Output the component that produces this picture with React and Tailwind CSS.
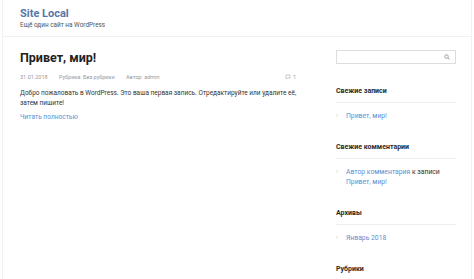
export default function App() {
  const link = "text-[#5b8fd1]";
  const Widget = ({ title, children }) => (
    <div className="mb-[21px]">
      <div className="text-[7px] font-bold text-[#2a2a2a] leading-[10px] pb-[6px] border-b border-[#eee]">{title}</div>
      <div className="pt-[8px]">{children}</div>
    </div>
  );
  const Li = ({ children }) => (
    <div className="flex items-start text-[6.8px] leading-[10px]">
      <span className="w-[10px] text-[#ccc]">›</span>
      <div className="flex-1">{children}</div>
    </div>
  );
  return (
    <div className="w-[474px] h-[279px] overflow-hidden bg-white" style={{ fontFamily: "Roboto, 'Noto Sans', sans-serif" }}>
      <div className="mx-[2px] h-full border-x border-[#f2f2f2]">
        <div className="h-[37px] border-b border-[#f0f0f0] pl-[17px] pt-[7px]">
          <div className="text-[11px] font-bold leading-[14px] text-[#5677a6]">Site Local</div>
          <div className="text-[6.4px] leading-[9px] text-[#555]">Ещё один сайт на WordPress</div>
        </div>
        <div className="flex pl-[17px] pt-[11px]">
          <div className="w-[284px]">
            <h1 className="text-[12.5px] font-bold leading-[20px] text-[#222]">Привет, мир!</h1>
            <div className="flex items-center mt-[5px] pr-[8px] text-[5.5px] leading-[8px] text-[#999]">
              <span className="w-[39px]">31.01.2018</span>
              <span className="w-[67px]">Рубрика: Без рубрики</span>
              <span>Автор: admin</span>
              <span className="ml-auto flex items-center gap-[2px]">
                <svg width="6" height="6" viewBox="0 0 12 12" fill="none" stroke="#aaa" strokeWidth="1.2"><path d="M2 2h8v6H5l-3 2z" /></svg>
                1
              </span>
            </div>
            <p className="mt-[7px] text-[6.5px] leading-[10px] text-[#333]">
              Добро пожаловать в WordPress. Это ваша первая запись. Отредактируйте или удалите её, затем пишите!
            </p>
            <div className={`mt-[4px] text-[6.6px] leading-[10px] ${link}`}>Читать полностью</div>
          </div>
          <div className="ml-[32px] w-[120px]">
            <div className="h-[14px] border border-[#ddd] flex items-center justify-end pr-[5px] mt-[2px]">
              <svg width="6" height="6" viewBox="0 0 12 12" fill="none" stroke="#888" strokeWidth="1.6"><circle cx="5" cy="5" r="3.5" /><path d="M8 8l3 3" /></svg>
            </div>
            <div className="mt-[22px]">
              <Widget title="Свежие записи">
                <Li><span className={link}>Привет, мир!</span></Li>
              </Widget>
              <Widget title="Свежие комментарии">
                <Li><span className={link}>Автор комментария</span> <span className="text-[#333]">к записи</span> <span className={link}>Привет, мир!</span></Li>
              </Widget>
              <Widget title="Архивы">
                <Li><span className={link}>Январь 2018</span></Li>
              </Widget>
              <div className="text-[7px] font-bold text-[#2a2a2a] leading-[10px]">Рубрики</div>
            </div>
          </div>
        </div>
      </div>
    </div>
  );
}
